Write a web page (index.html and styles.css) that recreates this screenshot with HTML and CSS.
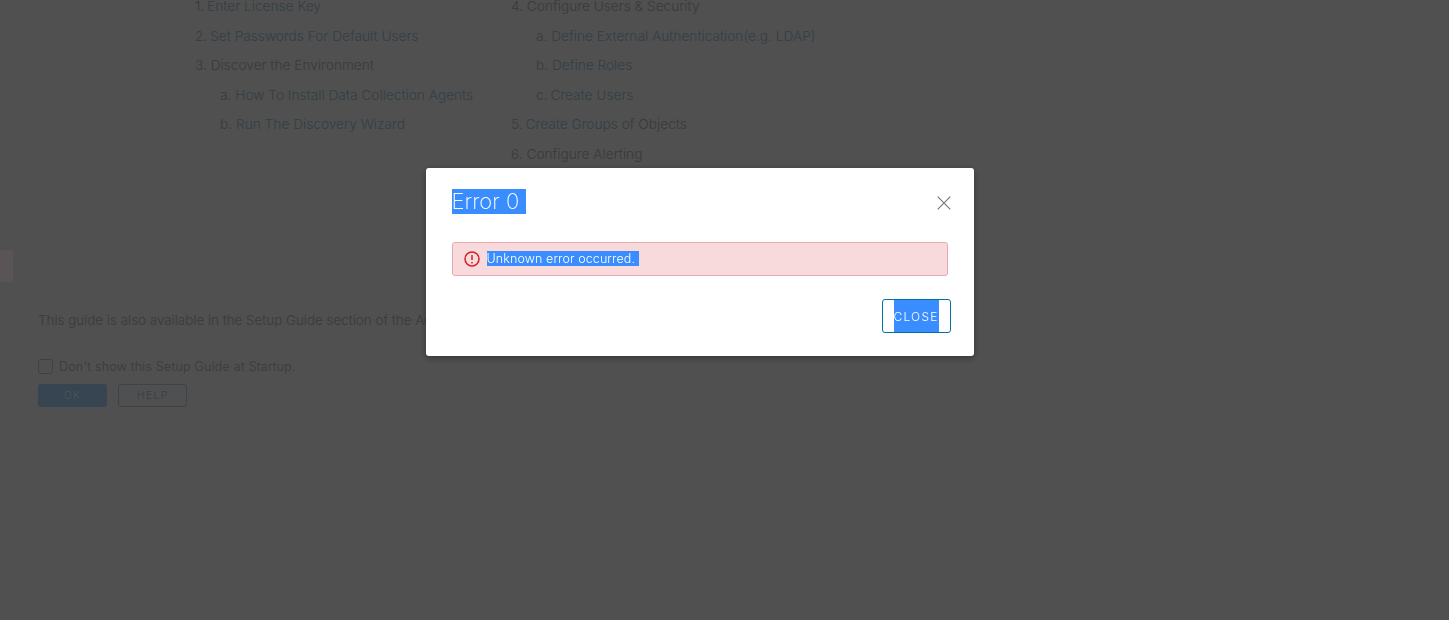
FILE: index.html
```html
<!DOCTYPE html>
<html lang="en">
<head>
<meta charset="utf-8">
<title>Setup Guide</title>
<link rel="stylesheet" href="styles.css">
</head>
<body>
<main class="page">
  <div class="columns">
    <ol class="steps steps-left">
      <li><span class="num tight">1.</span> <a>Enter License Key</a></li>
      <li><span class="num tight">2.</span> <a>Set Passwords For Default Users</a></li>
      <li><span class="num">3.</span> Discover the Environment</li>
      <li class="sub"><span class="num">a.</span> <a>How To Install Data Collection Agents</a></li>
      <li class="sub"><span class="num">b.</span> <a>Run The Discovery Wizard</a></li>
    </ol>
    <ol class="steps steps-right">
      <li><span class="num">4.</span> Configure Users &amp; Security</li>
      <li class="sub"><span class="num">a.</span> <a>Define External Authentication(e.g. LDAP)</a></li>
      <li class="sub"><span class="num">b.</span> <a>Define Roles</a></li>
      <li class="sub"><span class="num tight">c.</span> <a>Create Users</a></li>
      <li><span class="num tight">5.</span> <a>Create Groups</a> of Objects</li>
      <li><span class="num">6.</span> Configure Alerting</li>
    </ol>
  </div>
  <p class="note">This guide is also available in the Setup Guide section of the Administration page.</p>
  <label class="check"><span class="box"></span>Don't show this Setup Guide at Startup.</label>
  <div class="actions">
    <span class="btn btn-primary">OK</span>
    <span class="btn btn-outline">HELP</span>
  </div>
</main>
<div class="side-tab"></div>
<div class="backdrop">
  <div class="modal" role="dialog">
    <header class="modal-head">
      <h3 class="modal-title"><span class="sel">Error 0 </span></h3>
      <svg class="close-x" viewBox="0 0 14 14" width="14" height="14" aria-hidden="true"><path d="M.7.7l12.6 12.6M13.3.7L.7 13.3"/></svg>
    </header>
    <div class="alert">
      <svg class="alert-icon" viewBox="0 0 16 16" width="16" height="16" aria-hidden="true"><circle cx="8" cy="8" r="7"/><path d="M8 4v5"/><path d="M8 11v1.4"/></svg>
      <span class="alert-text"><span class="sel">Unknown error occurred. </span></span>
    </div>
    <footer class="modal-foot">
      <span class="close-btn"><span class="sel">CLOSE</span></span>
    </footer>
  </div>
</div>
</body>
</html>
```
FILE: styles.css
```css
* { box-sizing: border-box; }
html, body { margin: 0; height: 100%; overflow: hidden; }
body {
  background: #858585;
  color: #626262;
  font-family: Inter, "Liberation Sans", sans-serif;
  font-size: 13.4px;
  font-weight: 300;
}
.page { padding: 0 0 0 38px; height: 620px; overflow: hidden; }
.columns { display: flex; margin-top: -8px; height: 318px; font-size: 13.7px; }
.steps { list-style: none; margin: 0; padding: 0; }
.steps li { height: 29.5px; line-height: 29.5px; white-space: nowrap; }
.steps-left { margin-left: 157px; width: 316px; }
.sub { padding-left: 25px; }
.tight { margin-right: -1px; }
a { color: #566a75; }
.note { margin: 0; line-height: 20px; white-space: nowrap; }
.check { display: flex; align-items: center; margin-top: 26px; font-size: 12.4px; height: 20px; letter-spacing: .28px; }
.box { width: 15px; height: 15px; border: 1px solid #6c6c6c; border-radius: 3px; margin-right: 6px; }
.actions { display: flex; gap: 11px; margin-top: 8px; }
.btn { width: 69px; height: 23px; border-radius: 3px; font-size: 10.5px; letter-spacing: 1.2px; display: flex; align-items: center; justify-content: center; }
.btn-primary { background: #5b7487; color: #7f8d9b; }
.btn-outline { border: 1px solid #5f7280; color: #5c6a78; }
.side-tab { position: absolute; left: 0; top: 250px; width: 13px; height: 32px; background: #978d90; }
.backdrop { position: fixed; inset: 0; background: rgba(0,0,0,.4); display: flex; align-items: flex-start; justify-content: center; padding-top: 168px; padding-right: 50px; }
.modal { width: 548px; height: 188px; background: #fff; border-radius: 3px; box-shadow: 0 2px 6px rgba(0,0,0,.35); padding: 21px 26px 0; color: #565656; }
.modal-head { display: flex; justify-content: space-between; align-items: center; height: 25px; }
.modal-title { margin: 0; font-size: 22px; font-weight: 200; line-height: 25px; white-space: pre; }
.modal-title .sel { display: inline-block; padding-right: 1px; }
.sel { background: #3a8dff; color: #fff; }
.close-x { fill: none; stroke: #7a7a7a; stroke-width: 1.2; margin-right: -3px; margin-top: 3px; }
.alert { display: flex; align-items: center; height: 34px; margin-top: 28px; border: 1px solid #e8a8ad; border-radius: 3px; background: #f8dadd; padding-left: 11px; }
.alert-icon { fill: none; stroke: #d3202a; stroke-width: 1.5; margin-right: 7px; }
.alert-text { font-size: 12.5px; line-height: 17px; white-space: pre; letter-spacing: .1px; margin-top: -1px; }
.modal-foot { display: flex; justify-content: flex-end; margin-top: 23px; margin-right: -3px; }
.close-btn { width: 69px; height: 34px; border: 1px solid #0072a3; border-radius: 3px; font-size: 12px; letter-spacing: 1.2px; display: flex; align-items: center; justify-content: center; }
.close-btn .sel { line-height: 34px; height: 32px; display: block; }
```
